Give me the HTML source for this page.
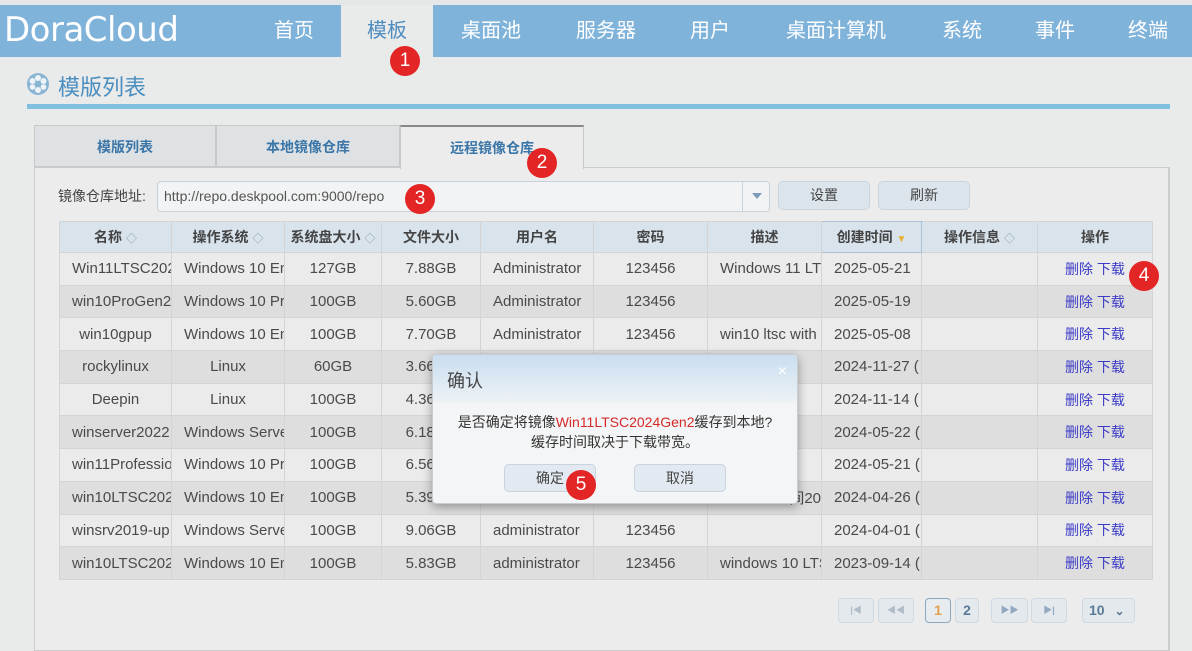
<!DOCTYPE html>
<html><head><meta charset="utf-8"><style>
*{margin:0;padding:0;box-sizing:border-box}
body{width:1192px;height:651px;overflow:hidden;background:#e9eaea;font-family:"Liberation Sans","Noto Sans CJK SC",sans-serif;position:relative;color:#444}
.top{position:absolute;left:0;top:0;width:1192px;height:5px;background:#e4e6e8}
.bar{position:absolute;left:0;top:5px;width:1192px;height:52px;background:#80b3da}
.logo{position:absolute;left:4px;top:10px;font-size:34px;color:#fff;font-family:"DejaVu Sans","Liberation Sans",sans-serif;letter-spacing:-0.5px}
.nav{position:absolute;top:5px;height:52px;line-height:52px;font-size:20px;color:#fff;transform:translateX(-50%)}
.act{position:absolute;left:341px;top:5px;width:92px;height:55px;background:#e9eaea}
.title{position:absolute;left:58px;top:70px;font-size:22px;color:#4a8ec0}
.line{position:absolute;left:27px;top:104px;width:1143px;height:5px;background:#7fbfdf}
.panel{position:absolute;left:34px;top:167px;width:1136px;height:484px;background:#ececec;border:1px solid #ccc;border-right:2px solid #ccc}
.tab{position:absolute;top:125px;height:42px;line-height:42px;text-align:center;font-size:14px;font-weight:bold;color:#3b76a8;background:#dfe2e4;border:1px solid #c8c8c8}
.lbl{position:absolute;left:58px;top:186px;font-size:14px;color:#444}
.inp{position:absolute;left:157px;top:181px;width:613px;height:31px;border:1px solid #c8d2da;border-radius:4px;background:#f2f3f4;font-size:14px;color:#555;padding:6px 6px;font-family:"Liberation Sans",sans-serif}
.dd{position:absolute;left:742px;top:181px;width:28px;height:31px;border-left:1px solid #c8d2da}
.btn{position:absolute;top:181px;height:29px;line-height:27px;text-align:center;font-size:14px;color:#444;background:#dde5ec;border:1px solid #c9d4dd;border-radius:5px}
table{position:absolute;left:59px;top:221px;width:1093px;border-collapse:collapse;table-layout:fixed;font-size:15px}
td,th{border:1px solid #d4d4d4;height:32.7px;white-space:nowrap;overflow:hidden;text-align:center;color:#4a4a4a;font-weight:normal}
th{height:31px;background:#d9e3ec;font-weight:bold;font-size:14px;color:#444}
tr:nth-child(odd) td{background:#dedede}
tr:nth-child(even) td{background:#ebebeb}
td.l{text-align:left;padding-left:12px}
.op{color:#3c3cc8;font-size:14px}
.s{color:#9aa;font-size:11px}
.tri{color:#e8b030;font-size:10px}
.dlg{position:absolute;left:432px;top:354px;width:366px;height:150px;background:#f4f5f6;border:1px solid #c8ccd0;border-radius:4px;box-shadow:0 3px 10px rgba(0,0,0,.35)}
.dh{height:48px;background:linear-gradient(#c9def0,#eef2f5);border-radius:4px 4px 0 0;font-size:18px;color:#444;padding:12px 0 0 14px}
.dm{text-align:center;font-size:14px;color:#333;line-height:20px;margin-top:9px}
.db{position:absolute;top:109px;width:92px;height:28px;line-height:26px;text-align:center;font-size:14px;color:#444;background:#e2e9f0;border:1px solid #c8d3dc;border-radius:5px}
.c{position:absolute;width:30px;height:30px;border-radius:50%;background:#e32525;color:#fff;font-size:19px;line-height:30px;text-align:center;font-family:"Liberation Sans",sans-serif}
.pg{position:absolute;top:598px;height:25px;line-height:23px;text-align:center;font-size:14px;border:1px solid #cfd9e2;border-radius:4px;background:#e4e9ed;color:#b0bcc8;font-weight:bold}
</style></head><body>
<div class="top"></div><div class="bar"></div>
<div class="act"></div>
<div class="logo">DoraCloud</div>
<div class="nav" style="left:294px">首页</div>
<div class="nav" style="left:387px;color:#4f8cc0">模板</div>
<div class="nav" style="left:491px">桌面池</div>
<div class="nav" style="left:606px">服务器</div>
<div class="nav" style="left:710px">用户</div>
<div class="nav" style="left:836px">桌面计算机</div>
<div class="nav" style="left:962px">系统</div>
<div class="nav" style="left:1055px">事件</div>
<div class="nav" style="left:1148px">终端</div>
<svg style="position:absolute;left:26px;top:72px" width="24" height="24" viewBox="0 0 24 24"><circle cx="12" cy="12" r="11" fill="#8ab4d4"/><g fill="#eef3f7"><circle cx="12" cy="6" r="3"/><circle cx="12" cy="18" r="3"/><circle cx="6.5" cy="9" r="3"/><circle cx="17.5" cy="9" r="3"/><circle cx="6.5" cy="15" r="2.8"/><circle cx="17.5" cy="15" r="2.8"/></g></svg>
<div class="title">模版列表</div>
<div class="line"></div>
<div class="panel"></div>
<div class="tab" style="left:34px;width:182px">模版列表</div>
<div class="tab" style="left:216px;width:184px">本地镜像仓库</div>
<div class="tab" style="left:400px;width:184px;height:44px;background:#ececec;border-top:2px solid #888;border-bottom:none">远程镜像仓库</div>
<div class="lbl">镜像仓库地址:</div>
<div class="inp">http://repo.deskpool.com:9000/repo</div>
<div class="dd"><div style="margin:12px 0 0 9px;width:0;height:0;border-left:5px solid transparent;border-right:5px solid transparent;border-top:6px solid #7a9cb8"></div></div>
<div class="btn" style="left:778px;width:92px">设置</div>
<div class="btn" style="left:878px;width:92px">刷新</div>
<table>
<colgroup><col style="width:112px"><col style="width:113px"><col style="width:97px"><col style="width:99px"><col style="width:113px"><col style="width:114px"><col style="width:114px"><col style="width:100px"><col style="width:116px"><col style="width:115px"></colgroup>
<tr><th>名称 <span class="s">◇</span></th><th>操作系统 <span class="s">◇</span></th><th>系统盘大小 <span class="s">◇</span></th><th>文件大小</th><th>用户名</th><th>密码</th><th>描述</th><th style="border:1px solid #a9c2d8">创建时间 <span class="tri">▼</span></th><th>操作信息 <span class="s">◇</span></th><th>操作</th></tr>
<tr><td class="l">Win11LTSC2024Gen2</td><td class="l">Windows 10 Ent</td><td>127GB</td><td>7.88GB</td><td class="l">Administrator</td><td>123456</td><td class="l">Windows 11 LTSC</td><td class="l">2025-05-21</td><td></td><td class="op">删除 下载</td></tr>
<tr><td class="l">win10ProGen2</td><td class="l">Windows 10 Pro</td><td>100GB</td><td>5.60GB</td><td class="l">Administrator</td><td>123456</td><td></td><td class="l">2025-05-19</td><td></td><td class="op">删除 下载</td></tr>
<tr><td>win10gpup</td><td class="l">Windows 10 Ent</td><td>100GB</td><td>7.70GB</td><td class="l">Administrator</td><td>123456</td><td class="l">win10 ltsc with</td><td class="l">2025-05-08</td><td></td><td class="op">删除 下载</td></tr>
<tr><td>rockylinux</td><td>Linux</td><td>60GB</td><td>3.66GB</td><td></td><td></td><td></td><td class="l">2024-11-27 (</td><td></td><td class="op">删除 下载</td></tr>
<tr><td>Deepin</td><td>Linux</td><td>100GB</td><td>4.36GB</td><td></td><td></td><td></td><td class="l">2024-11-14 (</td><td></td><td class="op">删除 下载</td></tr>
<tr><td class="l">winserver2022</td><td class="l">Windows Server</td><td>100GB</td><td>6.18GB</td><td></td><td></td><td></td><td class="l">2024-05-22 (</td><td></td><td class="op">删除 下载</td></tr>
<tr><td class="l">win11Professional</td><td class="l">Windows 10 Pro</td><td>100GB</td><td>6.56GB</td><td></td><td></td><td></td><td class="l">2024-05-21 (</td><td></td><td class="op">删除 下载</td></tr>
<tr><td class="l">win10LTSC2021</td><td class="l">Windows 10 Ent</td><td>100GB</td><td>5.39GB</td><td></td><td></td><td style="text-align:right">间20</td><td class="l">2024-04-26 (</td><td></td><td class="op">删除 下载</td></tr>
<tr><td class="l">winsrv2019-up</td><td class="l">Windows Server</td><td>100GB</td><td>9.06GB</td><td class="l">administrator</td><td>123456</td><td></td><td class="l">2024-04-01 (</td><td></td><td class="op">删除 下载</td></tr>
<tr><td class="l">win10LTSC2021</td><td class="l">Windows 10 Ent</td><td>100GB</td><td>5.83GB</td><td class="l">administrator</td><td>123456</td><td class="l">windows 10 LTSC</td><td class="l">2023-09-14 (</td><td></td><td class="op">删除 下载</td></tr>
</table>
<div class="pg" style="left:838px;width:36px;font-size:9px">|◀</div>
<div class="pg" style="left:878px;width:36px;font-size:9px">◀◀</div>
<div class="pg" style="left:925px;width:26px;color:#e0a050;border-color:#8aa8c0;background:#e8ecef">1</div>
<div class="pg" style="left:955px;width:24px;color:#5a7a98">2</div>
<div class="pg" style="left:991px;width:37px;font-size:9px;color:#90a8c0">▶▶</div>
<div class="pg" style="left:1031px;width:36px;font-size:9px;color:#90a8c0">▶|</div>
<div class="pg" style="left:1082px;width:53px;color:#5a7a98;text-align:left;padding-left:6px">10 <span style="font-size:12px;margin-left:6px">⌄</span></div>
<div class="dlg">
<div class="dh">确认<span style="position:absolute;right:10px;top:8px;color:#fff;font-size:16px">×</span></div>
<div class="dm">是否确定将镜像<span style="color:#d42a2a">Win11LTSC2024Gen2</span>缓存到本地?<br>缓存时间取决于下载带宽。</div>
<div class="db" style="left:71px">确定</div>
<div class="db" style="left:201px">取消</div>
</div>
<div class="c" style="left:390px;top:46px">1</div>
<div class="c" style="left:527px;top:148px">2</div>
<div class="c" style="left:405px;top:184px">3</div>
<div class="c" style="left:1129px;top:261px">4</div>
<div class="c" style="left:566px;top:470px">5</div>
</body></html>
